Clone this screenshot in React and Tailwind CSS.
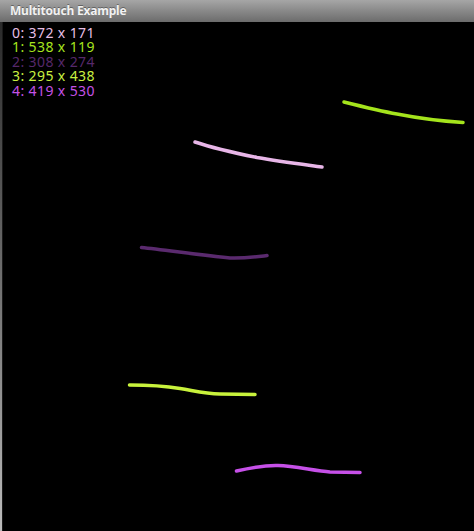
import React from "react";

const points = [
  { label: "0: 372 x 171", color: "text-[#e6bfe6]" },
  { label: "1: 538 x 119", color: "text-[#a6e41e]" },
  { label: "2: 308 x 274", color: "text-[#56286a]" },
  { label: "3: 295 x 438", color: "text-[#c8f040]" },
  { label: "4: 419 x 530", color: "text-[#c452e6]" },
];

// traces left by each finger, in page coordinates
const traces = [
  { stroke: "#e8b6e8", d: "M195 142 C210 147 225 151 257 157.5 C280 161.5 300 164 322 167" },
  { stroke: "#a4e41c", d: "M344 102 C360 106 380 111 397 114 C420 118.5 440 121 463 122.5" },
  { stroke: "#5a2a6e", d: "M141.5 247.5 C165 250 200 255 230 258 C245 258.5 255 257 267 255.5" },
  { stroke: "#c8f23c", d: "M129.5 385 C145 385 165 386 180 388.5 C195 391 205 394 220 394 L255 394.5" },
  { stroke: "#c650e8", d: "M236.5 471 C250 468 265 465 278 465.5 C295 466 315 471 330 472 L360 472.5" },
];

const App = () => {
  return (
    <div className="relative w-[474px] h-[531px] flex flex-col bg-black overflow-hidden">
      {/* Title bar */}
      <div className="h-[22px] shrink-0 flex items-center pl-[10px] bg-gradient-to-b from-[#a6a6a6] to-[#6c6c6c]">
        <span className="text-[12px] font-bold text-[#f2f2f2] tracking-[-0.2px] font-['Noto_Sans',sans-serif] leading-none [text-shadow:0_-1px_0_rgba(0,0,0,0.35)]">
          Multitouch Example
        </span>
      </div>

      <div className="flex flex-1">
        <div className="w-[3px] bg-gradient-to-b from-[#2a2a2a] to-[#bcbcbc] border-r border-[#1a1a1a]" />
        <div className="flex-1 pl-[9px] pt-[4px]">
          {points.map((p) => (
            <div
              key={p.label}
              className={`${p.color} text-[14px] leading-[14.4px] tracking-[0.4px] font-['Noto_Sans',sans-serif]`}
            >
              {p.label}
            </div>
          ))}
        </div>
      </div>

      <svg
        className="absolute inset-0 pointer-events-none"
        width="474"
        height="531"
        viewBox="0 0 474 531"
      >
        {traces.map((t) => (
          <path
            key={t.d}
            d={t.d}
            fill="none"
            stroke={t.stroke}
            strokeWidth="3.5"
            strokeLinecap="round"
            strokeLinejoin="round"
          />
        ))}
      </svg>
    </div>
  );
};

export default App;
